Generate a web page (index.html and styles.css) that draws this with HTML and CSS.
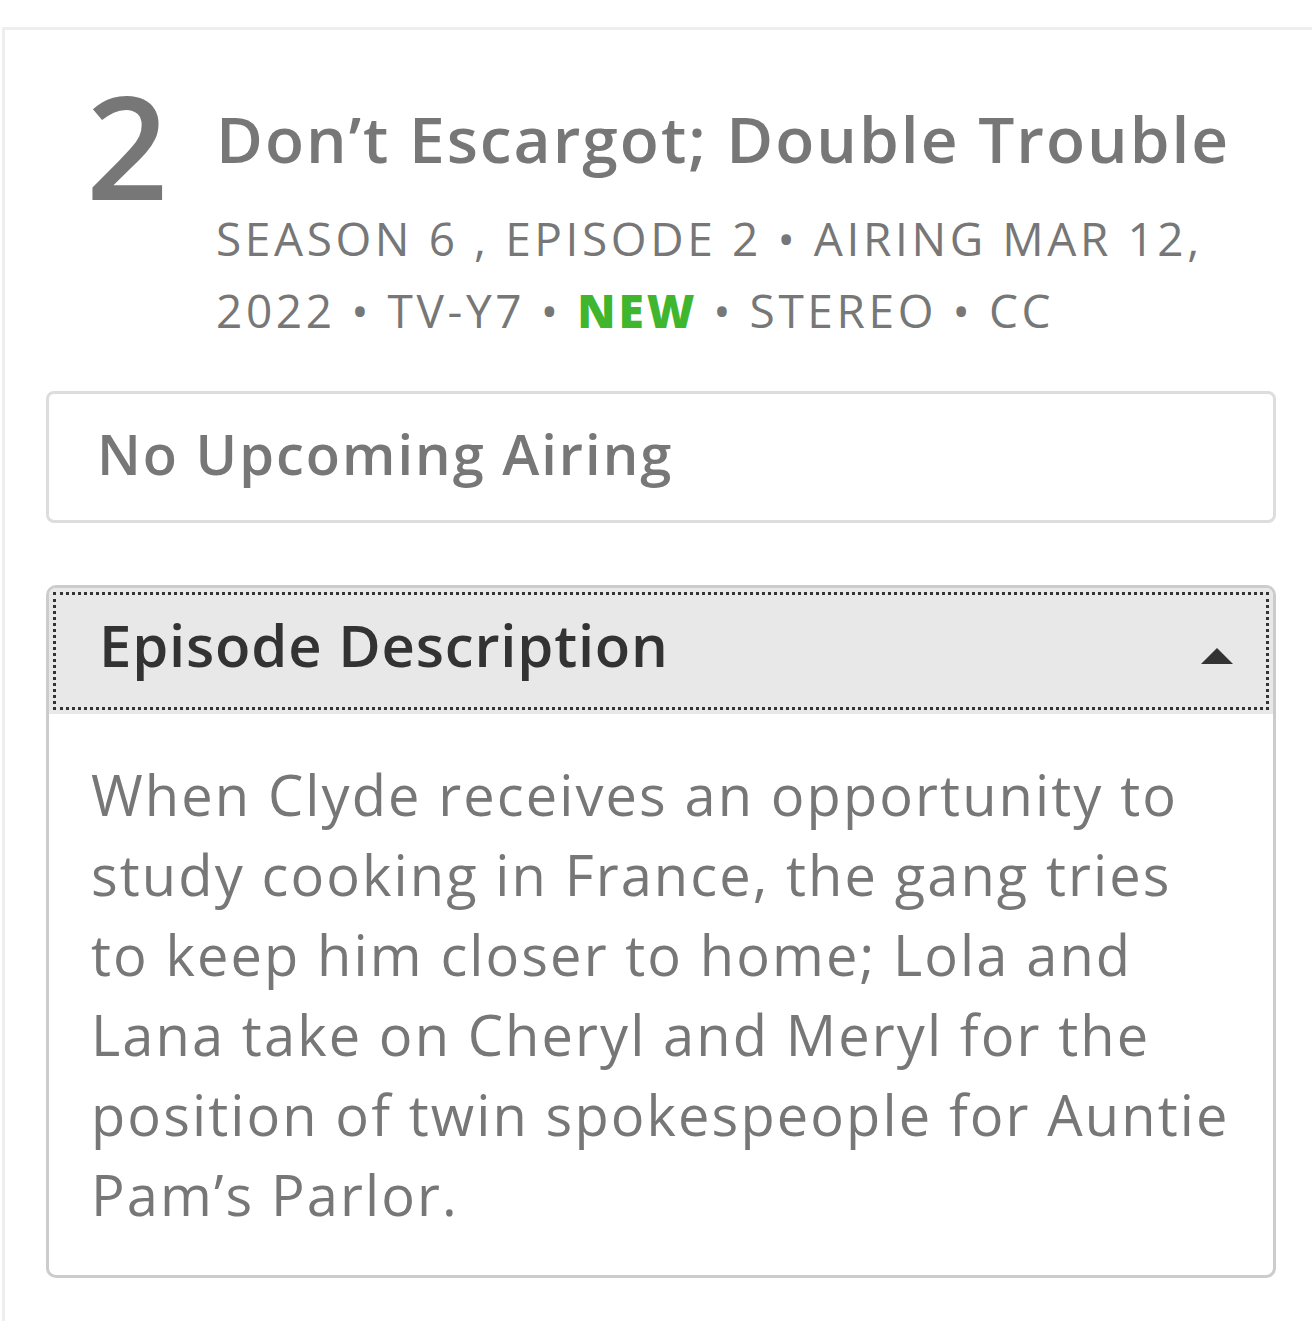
FILE: index.html
```html
<!DOCTYPE html>
<html lang="en">
<head>
    <meta charset="UTF-8">
    <meta name="viewport" content="width=device-width, initial-scale=1.0">
    <title>Don't Escargot; Double Trouble</title>
    <link rel="stylesheet" href="styles.css">
</head>
<body>
    <div class="episode-card">
        <div class="episode-header">
            <div class="episode-number">2</div>
            <div class="episode-info">
                <h1 class="episode-title">Don&rsquo;t Escargot; Double Trouble</h1>
                <p class="episode-meta">
                    SEASON 6 , EPISODE 2 &bull; AIRING MAR 12, 2022 &bull; TV-Y7 &bull; <span class="new">NEW</span> &bull; STEREO &bull; CC
                </p>
            </div>
        </div>

        <div class="airing-box">No Upcoming Airing</div>

        <div class="panel">
            <button class="panel-toggle" type="button" aria-expanded="true">
                <span>Episode Description</span>
                <span class="caret"></span>
            </button>
            <div class="panel-body">
                When Clyde receives an opportunity to study cooking in France, the gang tries to keep him closer to home; Lola and Lana take on Cheryl and Meryl for the position of twin spokespeople for Auntie Pam&rsquo;s Parlor.
            </div>
        </div>
    </div>
</body>
</html>
```

FILE: styles.css
```css
body {
    margin: 0;
    background: #fff;
    font-family: "Open Sans", "Noto Sans", sans-serif;
    color: #777;
}
.episode-card {
    box-sizing: border-box;
    min-height: calc(100vh - 27px);
    margin: 27px 0 0 2px;
    border: 3px solid #eee;
    border-right: none;
    border-bottom: none;
    padding: 42px 36px 40px 41px;
}
.episode-header {
    display: flex;
    align-items: flex-start;
    padding-left: 40px;
    margin-bottom: 45px;
}
.episode-number {
    font-size: 144px;
    font-weight: 600;
    line-height: 1;
    color: #777;
    width: 130px;
    flex-shrink: 0;
}
.episode-title {
    margin: 29px 0 0;
    font-size: 64px;
    font-weight: 600;
    line-height: 1.2;
    letter-spacing: 2px;
    color: #777;
}
.episode-meta {
    margin: 24px 0 0;
    font-size: 46px;
    line-height: 72px;
    letter-spacing: 3.6px;
    text-transform: uppercase;
}
.new {
    color: #40b62e;
    font-weight: 800;
    letter-spacing: 3px;
}
.airing-box {
    box-sizing: border-box;
    height: 132px;
    border: 3px solid #ddd;
    border-radius: 8px;
    padding: 0 48px 10px;
    line-height: 118px;
    font-size: 56px;
    font-weight: 600;
    letter-spacing: 2px;
    color: #777;
    margin-bottom: 62px;
}
.panel {
    border: 3px solid #ccc;
    border-radius: 10px;
    overflow: hidden;
}
.panel-toggle {
    box-sizing: border-box;
    display: flex;
    width: 100%;
    align-items: center;
    justify-content: space-between;
    height: 126px;
    padding: 0 40px 13px 50px;
    border: none;
    background: #e8e8e8;
    font-family: inherit;
    font-size: 58px;
    font-weight: 600;
    letter-spacing: 0.8px;
    color: #333;
    outline: 3px dotted #333;
    outline-offset: -7px;
    cursor: pointer;
}
.caret {
    width: 0;
    height: 0;
    margin-top: 23px;
    border-left: 16px solid transparent;
    border-right: 16px solid transparent;
    border-bottom: 16px solid #333;
}
.panel-body {
    padding: 40px 42px 41px;
    font-size: 56px;
    line-height: 80px;
    letter-spacing: 2.1px;
    color: #777;
}
```
